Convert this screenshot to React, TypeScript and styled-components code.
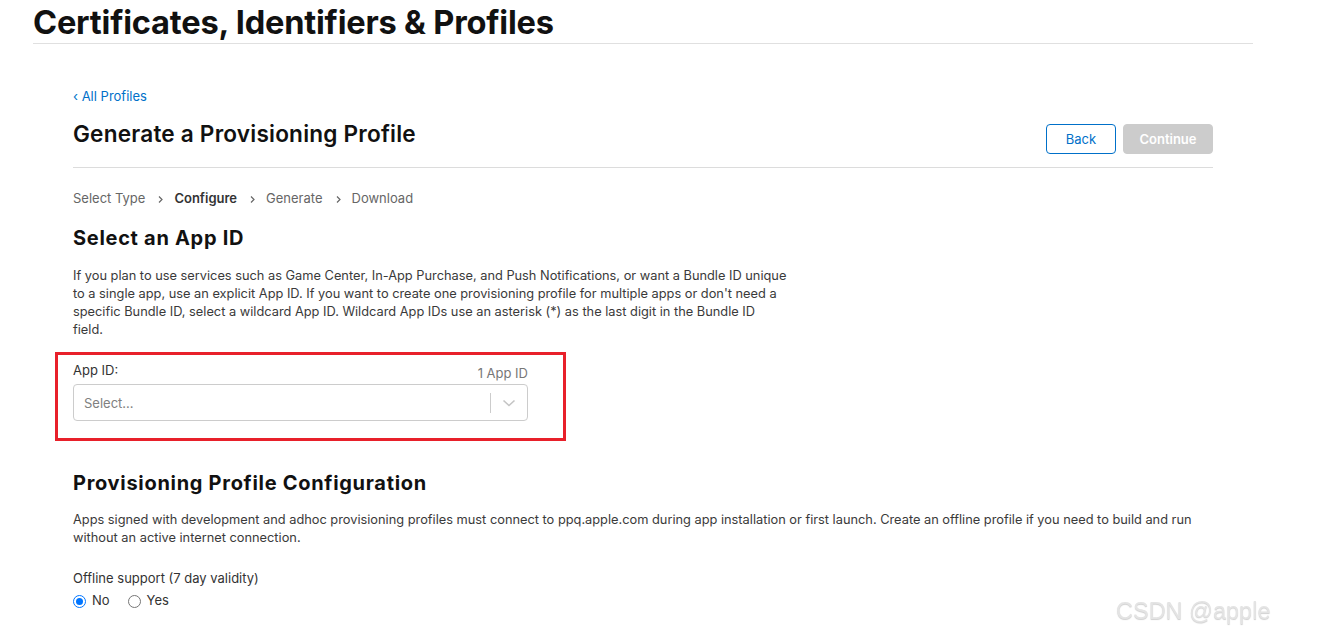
import React from 'react';
import styled, { createGlobalStyle } from 'styled-components';

const GlobalStyle = createGlobalStyle`
  body {
    margin: 0;
    background: #fff;
    font-family: Inter, "Liberation Sans", sans-serif;
    color: #333;
  }
`;

const Page = styled.div`
  width: 1220px;
  margin-left: 33px;
  height: 635px;
  overflow: hidden;
`;

const SiteTitle = styled.h1`
  margin: 0;
  padding-top: 1px;
  font-size: 32.6px;
  line-height: 42px;
  font-weight: 700;
  color: #111;
  letter-spacing: -0.2px;
  border-bottom: 1px solid #e0e0e0;
`;

const Content = styled.div`
  padding: 43px 40px 0 40px;
`;

const BackLink = styled.a`
  display: block;
  font-size: 13px;
  line-height: 18px;
  color: #0070c9;
  text-decoration: none;
`;

const HeaderRow = styled.div`
  display: flex;
  align-items: flex-end;
  justify-content: space-between;
  border-bottom: 1px solid #dcdcdc;
  padding: 19px 0 13px 0;
`;

const PageTitle = styled.h2`
  margin: 0;
  font-size: 22.6px;
  line-height: 30px;
  font-weight: 600;
  color: #111;
  letter-spacing: 0.2px;
  position: relative;
  top: -5px;
`;

const Buttons = styled.div`
  display: flex;
  gap: 7px;
`;

const Button = styled.button<{ $primary?: boolean }>`
  height: 30px;
  border-radius: 4px;
  font-family: inherit;
  font-size: 13px;
  padding: 0;
  ${(p) =>
    p.$primary
      ? `background:#cccccc;border:1px solid #cccccc;color:#fff;font-weight:600;width:90px;`
      : `background:#fff;border:1px solid #0070c9;color:#0070c9;width:70px;`}
`;

const Steps = styled.div`
  display: flex;
  align-items: center;
  margin-top: 21px;
  font-size: 13px;
  line-height: 18px;
  color: #666;
`;

const Step = styled.span<{ $active?: boolean }>`
  color: ${(p) => (p.$active ? '#333' : '#666')};
  font-weight: ${(p) => (p.$active ? 600 : 400)};
`;

const Chevron = styled.span`
  display: inline-flex;
  margin: 3px 10px 0 12px;
`;

const SectionTitle = styled.h3<{ $top: number }>`
  margin: ${(p) => p.$top}px 0 0 0;
  font-size: 20px;
  line-height: 26px;
  font-weight: 700;
  color: #111;
  letter-spacing: 0.7px;
`;

const Paragraph = styled.p<{ $top: number }>`
  margin: ${(p) => p.$top}px 0 0 0;
  font-size: 12.8px;
  line-height: 18px;
  color: #3a3a3a;
  max-width: 1140px;
`;

const Highlight = styled.div`
  box-sizing: border-box;
  margin: 13px 0 0 -18px;
  width: 511px;
  border: 3px solid #e8202a;
  padding: 6px 35px 17px 15px;
`;

const FieldHead = styled.div`
  display: flex;
  justify-content: space-between;
  font-size: 13px;
  line-height: 18px;
`;

const Label = styled.span`
  color: #333;
`;

const Count = styled.span`
  color: #777;
  margin-top: 3px;
`;

const SelectBox = styled.div`
  margin-top: 2px;
  height: 35px;
  border: 1px solid #ccc;
  border-radius: 4px;
  display: flex;
  align-items: center;
`;

const Placeholder = styled.span`
  flex: 1;
  padding-left: 10px;
  font-size: 13px;
  color: #808080;
`;

const Separator = styled.span`
  width: 1px;
  height: 20px;
  background: #ccc;
`;

const Indicator = styled.span`
  width: 36px;
  display: flex;
  justify-content: center;
`;

const OptionLabel = styled.div`
  margin-top: 22px;
  font-size: 13px;
  line-height: 18px;
  color: #333;
`;

const Radios = styled.div`
  display: flex;
  gap: 18px;
  margin-top: 4px;
  font-size: 13px;
  line-height: 18px;
`;

const RadioItem = styled.label`
  display: flex;
  align-items: center;
  gap: 6px;
  color: #333;
`;

const RadioDot = styled.span<{ $checked?: boolean }>`
  width: 13px;
  height: 13px;
  box-sizing: border-box;
  border-radius: 50%;
  border: ${(p) => (p.$checked ? '1px solid #0075ff' : '1px solid #767676')};
  display: flex;
  align-items: center;
  justify-content: center;
  margin-top: 3px;
  &::after {
    content: '';
    width: 7px;
    height: 7px;
    border-radius: 50%;
    background: ${(p) => (p.$checked ? '#0075ff' : 'transparent')};
  }
`;

const Watermark = styled.div`
  position: fixed;
  left: 1116px;
  top: 598px;
  font-family: "Liberation Sans", Arial, sans-serif;
  font-size: 23.5px;
  color: #e4e4e4;
  text-shadow: 0 1px 1px #cfcfcf;
`;

const ChevronIcon = () => (
  <svg width="7" height="9" viewBox="0 0 7 9">
    <path d="M2 1.5 L5 4.5 L2 7.5" stroke="#666" strokeWidth="1.2" fill="none" />
  </svg>
);

const steps = ['Select Type', 'Configure', 'Generate', 'Download'];

const App: React.FC = () => (
  <>
    <GlobalStyle />
    <Page>
      <SiteTitle>Certificates, Identifiers &amp; Profiles</SiteTitle>
      <Content>
        <BackLink href="#">‹ All Profiles</BackLink>
        <HeaderRow>
          <PageTitle>Generate a Provisioning Profile</PageTitle>
          <Buttons>
            <Button>Back</Button>
            <Button $primary>Continue</Button>
          </Buttons>
        </HeaderRow>
        <Steps>
          {steps.map((s, i) => (
            <React.Fragment key={s}>
              {i > 0 && (
                <Chevron>
                  <ChevronIcon />
                </Chevron>
              )}
              <Step $active={s === 'Configure'}>{s}</Step>
            </React.Fragment>
          ))}
        </Steps>
        <SectionTitle $top={18}>Select an App ID</SectionTitle>
        <Paragraph $top={16}>
          If you plan to use services such as Game Center, In-App Purchase, and Push Notifications, or want a Bundle ID unique
          <br />
          to a single app, use an explicit App ID. If you want to create one provisioning profile for multiple apps or don't need a
          <br />
          specific Bundle ID, select a wildcard App ID. Wildcard App IDs use an asterisk (*) as the last digit in the Bundle ID
          <br />
          field.
        </Paragraph>
        <Highlight>
          <FieldHead>
            <Label>App ID:</Label>
            <Count>1 App ID</Count>
          </FieldHead>
          <SelectBox>
            <Placeholder>Select...</Placeholder>
            <Separator />
            <Indicator>
              <svg width="14" height="8" viewBox="0 0 14 8">
                <path d="M1.5 1.5 L7 6.5 L12.5 1.5" stroke="#c4c4c4" strokeWidth="1.6" fill="none" />
              </svg>
            </Indicator>
          </SelectBox>
        </Highlight>
        <SectionTitle $top={29}>Provisioning Profile Configuration</SectionTitle>
        <Paragraph $top={15}>
          Apps signed with development and adhoc provisioning profiles must connect to ppq.apple.com during app installation or first launch. Create an offline profile if you need to build and run
          <br />
          without an active internet connection.
        </Paragraph>
        <OptionLabel>Offline support (7 day validity)</OptionLabel>
        <Radios>
          <RadioItem>
            <RadioDot $checked />
            No
          </RadioItem>
          <RadioItem>
            <RadioDot />
            Yes
          </RadioItem>
        </Radios>
      </Content>
    </Page>
    <Watermark>CSDN @apple</Watermark>
  </>
);

export default App;
